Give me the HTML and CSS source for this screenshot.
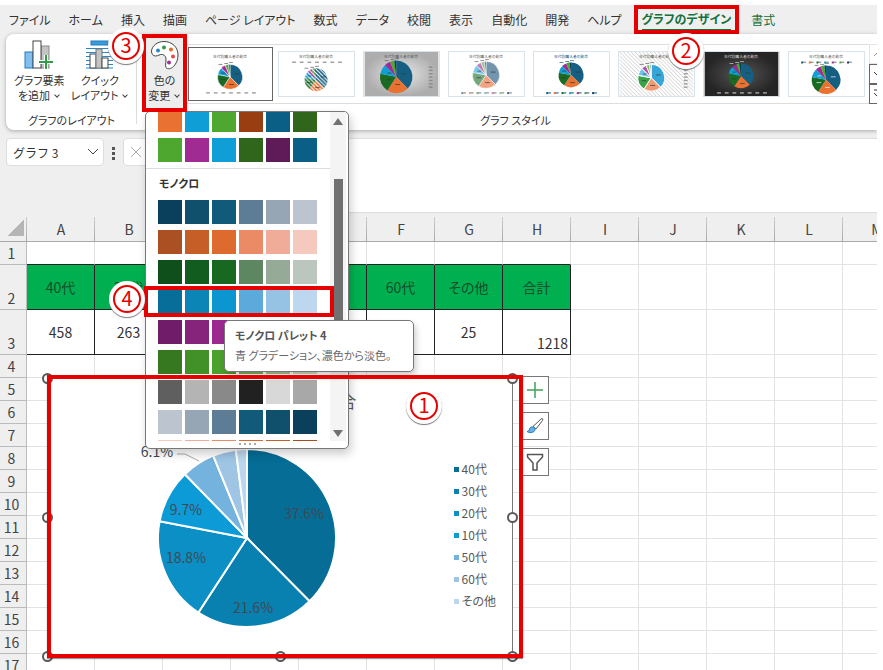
FILE: index.html
```
<!DOCTYPE html>
<html lang="ja">
<head>
  <meta charset="UTF-8">
  <meta name="viewport" content="width=device-width, initial-scale=1.0">
  <title>グラフのデザイン</title>
  <link rel="stylesheet" href="styles.css">
</head>
<body>
  <div class="window">
    <nav class="tabs">
      <button>ファイル</button>
      <button>ホーム</button>
      <button>挿入</button>
      <button>描画</button>
      <button>ページ レイアウト</button>
      <button>数式</button>
      <button>データ</button>
      <button>校閲</button>
      <button>表示</button>
      <button>自動化</button>
      <button>開発</button>
      <button>ヘルプ</button>
      <button class="active"><span>グラフのデザイン</span></button>
      <button class="context">書式</button>
    </nav>

    <div class="ribbon">
      <section class="group layout-group">
        <div class="tools">
          <button class="tool">
            <svg width="30" height="30" viewBox="0 0 30 30">
              <rect x="1" y="12" width="8" height="16" fill="#83beec" stroke="#1e7fc0"/>
              <rect x="17" y="6" width="8" height="22" fill="#c4c4c4" stroke="#8a8a8a"/>
              <rect x="9" y="1" width="8" height="27" fill="#fff" stroke="#444"/>
              <path d="M22 15v14M15 22h14" stroke="#fff" stroke-width="4"/>
              <path d="M22 15v14M15 22h14" stroke="#2f9c48" stroke-width="2"/>
            </svg>
            <span>グラフ要素<br>を追加 <i class="caret"></i></span>
          </button>
          <button class="tool">
            <svg width="30" height="30" viewBox="0 0 30 30">
              <rect x="6" y="1" width="17" height="4" fill="#3b9ad9" stroke="#1e7fc0"/>
              <path d="M1 8.500h27M1 12.500h27M1 16.500h27M1 20.500h27M1 24.500h27M1 28h27" stroke="#2589c9"/>
              <rect x="5" y="14" width="6" height="14" fill="#fff" stroke="#444"/>
              <rect x="11" y="9" width="6" height="19" fill="#c4c4c4" stroke="#777"/>
              <rect x="17" y="18" width="6" height="10" fill="#fff" stroke="#444"/>
            </svg>
            <span>クイック<br>レイアウト <i class="caret"></i></span>
          </button>
        </div>
        <h2>グラフのレイアウト</h2>
        <b class="step step-3">3</b>
      </section>

      <section class="group style-group">
        <div class="tools">
          <div class="color-menu">
            <button class="tool open">
              <svg width="30" height="30" viewBox="0 0 30 30">
                <path d="M14 1.500C7 1.500 2 6 1.500 11c0 3 1.500 5 4 5 3 0 4-2 7-1.500 3 1 3.500 3 3.500 5.500 0 3-1 5 0 7.500 1.500 2 5 1.500 7.500-1 3-3 4.500-7 4.500-11.500C28 7 22 1.500 14 1.500z" fill="#fff" stroke="#444"/>
                <circle cx="8" cy="10.500" r="2" fill="#2589c9"/>
                <circle cx="14" cy="7.500" r="2" fill="#2f9c48"/>
                <circle cx="21" cy="9.500" r="2" fill="#e46a1f"/>
                <circle cx="23" cy="16.500" r="2" fill="#ea4648"/>
                <circle cx="19" cy="22.500" r="2" fill="#a2309c"/>
              </svg>
              <span>色の<br>変更 <i class="caret"></i></span>
            </button>

            <div class="popup">
              <div class="popup-body">
                <div class="palettes">
                  <div id="colorful"></div>
                  <h3>モノクロ</h3>
                  <div id="mono"></div>
                </div>
                <div class="scrollbar">
                  <span class="up"></span>
                  <span class="thumb"></span>
                  <span class="down"></span>
                </div>
              </div>
              <div class="grip"><i></i><i></i><i></i><i></i></div>
              <div class="row-mark"></div>
              <div class="tooltip" role="tooltip">
                <strong>モノクロ パレット 4</strong>
                <span>青 グラデーション、濃色から淡色。</span>
              </div>
              <b class="step step-4">4</b>
            </div>
          </div>
          <div class="gallery" id="gallery"></div>
          <div class="gallery-scroll">
            <button aria-label="上へ" disabled><svg width="14" height="8" viewBox="0 0 14 8"><path d="M4 6l4-4 4 4"/></svg></button>
            <button aria-label="下へ"><svg width="14" height="8" viewBox="0 0 14 8"><path d="M4 2l4 4 4-4"/></svg></button>
            <button aria-label="その他"><svg width="14" height="10" viewBox="0 0 14 10"><path d="M4 1h8M4 4l4 4 4-4"/></svg></button>
          </div>
        </div>
        <h2>グラフ スタイル</h2>
        <b class="step step-2">2</b>
      </section>
    </div>

    <div class="formula-bar">
      <label class="name-box">
        <select aria-label="名前ボックス"><option>グラフ 3</option></select>
        <svg width="12" height="8" viewBox="0 0 12 8"><path d="M1 1l5 5 5-5"/></svg>
      </label>
      <div class="dots"><i></i><i></i><i></i></div>
      <button class="cancel" aria-label="キャンセル"><svg width="12" height="12" viewBox="0 0 12 12"><path d="M1 1l10 10M11 1L1 11"/></svg></button>
      <input class="formula" type="text" aria-label="数式バー">
    </div>

    <div class="sheet">
      <table id="grid"></table>

      <div class="chart">
        <h4>年代別購入者の割合</h4>
        <div class="chart-content">
          <svg id="pie" width="220" height="200" viewBox="0 0 220 200"></svg>
          <ul id="legend"></ul>
        </div>
        <i class="handle top left"></i>
        <i class="handle top right"></i>
        <i class="handle middle left"></i>
        <i class="handle middle right"></i>
        <i class="handle bottom left"></i>
        <i class="handle bottom center"></i>
        <i class="handle bottom right"></i>
        <div class="chart-buttons">
          <button aria-label="グラフ要素"><svg width="18" height="18" viewBox="0 0 18 18"><path d="M9 1v16M1 9h16" stroke="#3fa35a" stroke-width="1.500"/></svg></button>
          <button aria-label="グラフ スタイル"><svg width="18" height="18" viewBox="0 0 18 18">
            <path d="M7 9.500L15 2c1.500-1 2.500 0 1.500 1.500L10 12z" fill="#fff" stroke="#555"/>
            <path d="M1 14.500c2 0 2-1 2.500-2.500.700-2 2.500-2.500 4-2 2 1 2 3 .500 4.500-2 1.500-5 1.500-7 0z" fill="#69b1e4" stroke="#1e7fc0"/>
          </svg></button>
          <button aria-label="グラフ フィルター"><svg width="18" height="18" viewBox="0 0 18 18"><path d="M1.500 1.500h15v2.500L11 10v7H7v-7L1.500 4z" fill="#fff" stroke="#555" stroke-width="1.500"/></svg></button>
        </div>
        <div class="chart-mark"></div>
        <b class="step step-1">1</b>
      </div>
    </div>
  </div>

  <script src="script.js"></script>
</body>
</html>
```

FILE: styles.css
```
* {
  box-sizing: border-box;
}
body {
  margin: 0;
  height: 100vh;
  overflow: hidden;
  background: #fff;
  color: #333;
  font-family: "Noto Sans CJK JP", sans-serif;
  font-size: 12px;
  font-feature-settings: "palt";
}
button, select, input {
  font: inherit;
  font-feature-settings: inherit;
  color: inherit;
  border: none;
  background: none;
  padding: 0;
  margin: 0;
}
svg {
  display: block;
  fill: none;
}
.window {
  margin: 5px 6px 0 0;
  height: calc(100vh - 5px);
  overflow: hidden;
  background: #efefef;
  display: flex;
  flex-direction: column;
}

/* tabs */
.tabs {
  display: flex;
  flex: none;
  height: 29px;
  padding-left: 9px;
  gap: 18px;
  font-size: 12px;
  white-space: nowrap;
}
.tabs button {
  flex: none;
}
.tabs .active {
  border: 4px solid #e60000;
  padding: 0 4px;
  margin: 0 -6px;
  font-weight: bold;
  color: #14713c;
}
.tabs .active span {
  display: block;
  line-height: 20px;
  border-bottom: 1px solid #14713c;
}
.tabs .context {
  color: #14713c;
}

/* ribbon */
.ribbon {
  position: relative;
  display: flex;
  flex: none;
  height: 96px;
  margin-left: 6px;
  background: #fff;
  border-radius: 8px 0 0 8px;
  box-shadow: 0 1px 4px rgba(0, 0, 0, 0.3);
}
.group {
  position: relative;
  display: flex;
  flex-direction: column;
}
.group h2 {
  margin: 0;
  font-size: 11px;
  font-weight: normal;
  line-height: 16px;
  text-align: center;
}
.tools {
  display: flex;
  height: 78px;
}
.layout-group {
  width: 131px;
}
.layout-group::after {
  content: "";
  position: absolute;
  right: 0;
  top: 8px;
  bottom: 6px;
  border-right: 1px solid #ddd;
}
.tool {
  flex: 1;
  display: flex;
  flex-direction: column;
  align-items: center;
  padding-top: 6px;
  font-size: 11px;
  line-height: 15px;
  white-space: nowrap;
}
.tool span {
  margin-top: 3px;
}
.layout-group .tool {
  flex: none;
}
.layout-group .tools {
  justify-content: center;
  gap: 6px;
}
.caret {
  display: inline-block;
  width: 4px;
  height: 4px;
  margin: 0 2px 3px 2px;
  border: solid #444;
  border-width: 0 1px 1px 0;
  transform: rotate(45deg);
}
.style-group {
  flex: 1;
  min-width: 0;
  padding-left: 5px;
}
.style-group h2 {
  padding-left: 12px;
}
.color-menu {
  position: relative;
  flex: none;
}
.tool.open {
  width: 45px;
  height: 78px;
  border: 4px solid #e60000;
  padding-top: 2px;
  background: #ededed;
  position: relative;
  z-index: 12;
}
.gallery {
  display: flex;
  flex: none;
  gap: 8px;
  align-items: center;
  height: 60px;
  margin-top: 10px;
  padding: 0 4px;
  border: solid #ddd;
  border-width: 1px 0;
}
.gallery button {
  flex: none;
  border: 1px solid #dbe3ea;
}
.gallery button.selected {
  padding: 4px;
  border: 1px solid #666;
  margin: 0 -3px;
}
.gallery-scroll {
  display: flex;
  flex-direction: column;
  flex: 1;
  margin-top: 10px;
  height: 60px;
}
.gallery-scroll button {
  flex: 1;
  border: 1px solid #666;
  overflow: hidden;
}
.gallery-scroll button:disabled {
  border-color: #ccc;
  opacity: 0.5;
}
.gallery-scroll svg {
  stroke: #333;
}

/* color palette drop-down */
.popup {
  position: absolute;
  z-index: 10;
  left: 3px;
  top: 77px;
  width: 204px;
  height: 338px;
  background: #fff;
  border: 1px solid #777;
  border-radius: 5px;
  box-shadow: 2px 5px 10px rgba(0, 0, 0, 0.2);
}
.popup-body {
  display: flex;
  height: 329px;
  padding-right: 2px;
  overflow: hidden;
}
.palettes {
  flex: 1;
  margin-top: -7px;
}
.palette {
  display: flex;
  gap: 3px;
  height: 24px;
  margin: 3px 0 6px 12px;
}
.palette i {
  width: 24px;
  height: 24px;
}
.palettes h3 {
  margin: 0;
  padding: 0 13px;
  border-top: 1px solid #ddd;
  font-size: 11px;
  line-height: 28px;
}
.scrollbar {
  display: flex;
  flex-direction: column;
  align-items: center;
  justify-content: space-between;
  width: 16px;
  padding: 6px 0 4px;
  background: #f4f4f4;
}
.scrollbar .thumb {
  width: 9px;
  height: 168px;
  margin-bottom: 30px;
  background: #707070;
}
.scrollbar .up,
.scrollbar .down {
  border: 5px solid transparent;
}
.scrollbar .up {
  border-top: none;
  border-bottom: 7px solid #707070;
}
.scrollbar .down {
  border-bottom: none;
  border-top: 7px solid #707070;
}
.grip {
  display: flex;
  justify-content: center;
  gap: 3px;
  padding-top: 2px;
}
.grip i {
  width: 2px;
  height: 2px;
  background: #aaa;
}
.row-mark {
  position: absolute;
  left: -2px;
  top: 174px;
  width: 190px;
  height: 31px;
  border: 4px solid #e60000;
}
.tooltip {
  position: absolute;
  left: 78px;
  top: 208px;
  width: 190px;
  height: 52px;
  display: flex;
  flex-direction: column;
  padding: 4px 10px;
  font-size: 11px;
  line-height: 20px;
  white-space: nowrap;
  color: #666;
  background: #fff;
  border: 1px solid #777;
  border-radius: 5px;
  box-shadow: 2px 4px 6px rgba(0, 0, 0, 0.2);
}
.tooltip strong {
  color: #555;
}

/* numbered steps */
.step {
  position: absolute;
  z-index: 30;
  width: 28px;
  height: 28px;
  border: 2px solid #e60000;
  border-radius: 50%;
  background: #fff;
  box-shadow: 0 0 0 4px #fff, 0 1px 1px 4px #777;
  color: #e60000;
  font-size: 20px;
  font-weight: normal;
  line-height: 22px;
  text-align: center;
}
.step-1 {
  left: 362px;
  top: 13px;
}
.step-2 {
  left: 535px;
  top: 3px;
}
.step-3 {
  left: 106px;
  top: -2px;
}
.step-4 {
  left: -33px;
  top: 173px;
}

/* formula bar */
.formula-bar {
  display: flex;
  flex: none;
  align-items: flex-start;
  height: 75px;
  margin: 8px 0 0 6px;
}
.name-box {
  display: flex;
  align-items: center;
  width: 98px;
  height: 28px;
  padding: 0 4px 0 6px;
  background: #fff;
  border: 1px solid #ddd;
  border-radius: 4px;
  font-size: 12px;
}
.name-box select {
  flex: 1;
  min-width: 0;
  appearance: none;
  outline: none;
  font-feature-settings: normal;
}
.name-box svg {
  stroke: #444;
}
.dots {
  display: flex;
  flex-direction: column;
  gap: 2px;
  padding: 9px 8px;
}
.dots i {
  width: 3px;
  height: 3px;
  background: #555;
}
.cancel {
  display: flex;
  align-items: center;
  width: 80px;
  height: 28px;
  padding-left: 6px;
  background: #fff;
  border: 1px solid #ddd;
  border-radius: 4px;
}
.cancel svg {
  stroke: #aaa;
}
.formula {
  flex: 1;
  height: 75px;
  background: #fff;
  border: solid #ddd;
  border-width: 1px 0;
}

/* worksheet */
.sheet {
  position: relative;
  flex: 1;
  background: #fff;
}
#grid {
  border-collapse: separate;
  border-spacing: 0;
  font-size: 14px;
  line-height: 18px;
}
#grid th {
  padding: 0;
  font-weight: normal;
  color: #444;
  background: #efefef;
}
#grid thead th {
  min-width: 68px;
  height: 29px;
  padding-top: 4px;
  border-bottom: 1px solid #aaa;
  background: linear-gradient(#ccc, #aaa) right bottom / 1px 24px no-repeat #efefef;
}
#grid thead th:first-child {
  min-width: 27px;
  padding: 0 2px 0 7px;
}
#grid tbody th {
  border: solid #bbb;
  border-width: 0 1px 1px 0;
  vertical-align: bottom;
  padding: 0 3px 2px 0;
}
#grid td {
  height: 23px;
  padding: 0;
  border: solid #e3e3e3;
  border-width: 0 1px 1px 0;
  text-align: center;
}
#grid .tall td {
  height: 45px;
}
#grid .head {
  background: #00b050;
  color: #124d2b;
}
#grid .box {
  border-color: #222;
}
#grid .over {
  border-bottom-color: #222;
}
#grid .total {
  text-align: right;
  vertical-align: bottom;
  padding: 0 2px 2px 0;
}
.corner {
  width: 17px;
  height: 17px;
  background: linear-gradient(135deg, transparent 50%, #b5b5b5 50%);
}

/* chart */
.chart {
  position: absolute;
  left: 47px;
  top: 165px;
  width: 466px;
  height: 279px;
  background: #fff;
  border: 1px solid #777;
}
.chart h4 {
  margin: 8px 0 0;
  font-size: 17px;
  font-weight: normal;
  line-height: 28px;
  text-align: center;
  color: #595959;
}
.chart-content {
  display: flex;
  justify-content: space-between;
  align-items: center;
  padding: 20px 16px 0 89px;
}
#pie text {
  font-size: 14px;
  fill: #404a52;
  text-anchor: middle;
}
#legend {
  margin: 0;
  padding: 0;
  list-style: none;
  color: #595959;
  line-height: 22px;
}
#legend li {
  display: flex;
  align-items: center;
  gap: 3px;
}
#legend i {
  width: 5px;
  height: 5px;
}
.handle {
  position: absolute;
  width: 11px;
  height: 11px;
  border: 2px solid #595959;
  border-radius: 50%;
  background: #fff;
}
.handle.top { top: -6px; }
.handle.middle { top: 133px; }
.handle.bottom { bottom: -6px; }
.handle.left { left: -6px; }
.handle.center { left: 227px; }
.handle.right { right: -6px; }
.chart-buttons {
  position: absolute;
  left: 473px;
  top: -3px;
  display: flex;
  flex-direction: column;
  gap: 8px;
}
.chart-buttons button {
  display: flex;
  align-items: center;
  justify-content: center;
  width: 28px;
  height: 28px;
  background: #fff;
  border: 1px solid #777;
}
.chart-mark {
  position: absolute;
  z-index: 20;
  left: -1px;
  top: -4px;
  width: 476px;
  height: 283px;
  border: 4px solid #e60000;
  box-shadow: 0 1px 1px rgba(0, 0, 0, 0.4);
}
```

FILE: script.js
```
const values = [37.6, 21.6, 18.8, 9.7, 6.1, 4.2, 2.0];
const names = ['40代', '30代', '20代', '10代', '50代', '60代', 'その他'];
const blues = ['#056d96', '#0880b0', '#0b8fc4', '#0c9bd7', '#74b3de', '#9fc5e5', '#bcd7ed'];
const colorful = ['#156082', '#e97132', '#196b24', '#0f9ed5', '#a02b93', '#4ea72e', '#0c3f5a'];

function pieSlices(cx, cy, r, colors, extra) {
  const total = values.reduce((a, b) => a + b, 0);
  let angle = -Math.PI / 2;
  return values.map((v, i) => {
    const end = angle + v / total * Math.PI * 2;
    const x1 = cx + r * Math.cos(angle), y1 = cy + r * Math.sin(angle);
    const x2 = cx + r * Math.cos(end), y2 = cy + r * Math.sin(end);
    angle = end;
    return `<path d="M${cx} ${cy}L${x1} ${y1}A${r} ${r} 0 0 1 ${x2} ${y2}Z" fill="${colors[i]}" ${extra}/>`;
  }).join('');
}

// main chart
document.getElementById('pie').innerHTML =
  pieSlices(110, 103, 89, blues, 'stroke="#fff" stroke-width="2"') +
  '<path d="M40 19h8l14 7" stroke="#aaa"/>' +
  '<text x="167" y="84">37.6%</text>' +
  '<text x="116" y="178">21.6%</text>' +
  '<text x="49" y="128">18.8%</text>' +
  '<text x="49" y="80">9.7%</text>' +
  '<text x="20" y="22">6.1%</text>';

document.getElementById('legend').innerHTML = names
  .map((n, i) => `<li><i style="background:${blues[i]}"></i>${n}</li>`).join('');

// palettes
function palette(colors) {
  return `<button class="palette">${colors.split(' ')
    .map(c => `<i style="background:#${c}"></i>`).join('')}</button>`;
}
document.getElementById('colorful').innerHTML = [
  'e97132 0f9ed5 4ea72e 993e10 095f85 2f661b',
  '4ea72e a02b93 0f9ed5 2f661b 5f1a58 095f85'
].map(palette).join('');
document.getElementById('mono').innerHTML = [
  '0b405c 11506c 125a7a 5d7c96 97a6b5 bbc4cf',
  'aa5023 c65e27 dd6b2e eb8b65 f0ac98 f5c9be',
  '0f4f1b 135c1f 196822 5c8760 95aa97 bbc7be',
  '066e98 0b84b6 0c96d0 5caadb 96c2e3 bcd7ee',
  '701c68 86247c 9b2990 b35fa9 c993c2 dcbbd8',
  '35781f 419028 4aa12c 74b65c 9fca90 c3deba',
  '5f5f5f b4b4b4 898989 212121 d8d8d8 a8a8a8',
  'bbc4cf 97a6b5 5d7c96 125a7a 11506c 0b405c',
  'f5c9be f0ac98 eb8b65 dd6b2e c65e27 aa4a18'
].map(palette).join('');

// style gallery
const pale = ['#7395ad', '#f2a482', '#77a77d', '#7cc8ea', '#c57cbb', '#96ca83', '#456f86'];
const light = ['#36a5d8', '#ee9a72', '#38a344', '#70c6ea', '#b44ca9', '#72c153', '#6688a0'];
const styles = [
  { x: 38, y: 26, r: 13, bg: '#fff', legend: 'bottom', selected: true, colors: colorful, gap: 0.5 },
  { x: 38, y: 29, r: 12, bg: '#fff', legend: 'top', colors: colorful, hatch: true },
  { x: 33, y: 26, r: 17, bg: 'url(#gray)', legend: 'right', colors: colorful },
  { x: 38, y: 24, r: 14, bg: '#fff', legend: 'bottom', colors: pale, gap: 0.5, colored: true },
  { x: 38, y: 24, r: 13, bg: '#fff', legend: 'bottom', colors: colorful, ink: '#12507a', colored: true },
  { x: 33, y: 27, r: 14, bg: 'url(#stripes)', legend: 'right', colors: light, gap: 1 },
  { x: 38, y: 25, r: 13, bg: 'url(#dark)', legend: 'bottom', colors: colorful, ink: '#ddd' },
  { x: 38, y: 29, r: 15, bg: '#fff', legend: 'top', colors: colorful, colored: true }
];

function miniLegend(s) {
  const ink = s.ink || '#777';
  return values.map((v, i) => {
    const x = s.legend === 'right' ? 67 : 13 + i * 8;
    const y = s.legend === 'right' ? 15 + i * 3.5 : s.legend === 'top' ? 10 : 42;
    return `<rect x="${x}" y="${y}" width="4" height="1.500" fill="${ink}" opacity="0.7"/>` +
      (s.colored ? `<rect x="${x - 1}" y="${y}" width="2" height="2" fill="${s.colors[i]}"/>` : '');
  }).join('');
}

function thumb(s) {
  const stroke = s.gap ? `stroke="#fff" stroke-width="${s.gap}"` : '';
  const ink = s.ink || '#555';
  return `<button aria-label="スタイル" class="${s.selected ? 'selected' : ''}">
    <svg width="75" height="44" viewBox="0 0 77 46">
      <rect width="77" height="46" fill="${s.bg}"/>
      <text x="38" y="6" font-size="4" text-anchor="middle" fill="${ink}">年代別購入者の割合</text>
      ${pieSlices(s.x, s.y, s.r, s.colors, stroke)}
      ${s.hatch ? `<circle cx="${s.x}" cy="${s.y}" r="${s.r + 1}" fill="url(#hatch)"/>` : ''}
      <path d="M${s.x - 12} ${s.y - s.r}h4M${s.x - 6} ${s.y - s.r - 1}h4M${s.x - 1} ${s.y - s.r - 2}h4" stroke="${ink}" opacity="0.7"/>
      <path d="M${s.x + 5} ${s.y - 3}h5M${s.x - 1} ${s.y + 8}h5M${s.x - 10} ${s.y + 3}h5M${s.x - 9} ${s.y - 4}h4" stroke="${s.r === 15 ? '#fff' : '#333'}" opacity="0.7"/>
      ${miniLegend(s)}
    </svg></button>`;
}

const defs = `<svg width="0" height="0" style="position:absolute"><defs>
  <radialGradient id="gray"><stop offset="0" stop-color="#e8e8e8"/><stop offset="1" stop-color="#adadad"/></radialGradient>
  <radialGradient id="dark"><stop offset="0" stop-color="#555"/><stop offset="1" stop-color="#252525"/></radialGradient>
  <pattern id="stripes" width="4" height="4" patternUnits="userSpaceOnUse"><rect width="4" height="4" fill="#fff"/><path d="M-1 -1L5 5M-1 3L1 5M3 -1L5 1" stroke="#ccc"/></pattern>
  <pattern id="hatch" width="4" height="4" patternUnits="userSpaceOnUse"><path d="M-1 -1L5 5M-1 3L1 5M3 -1L5 1" stroke="#fff" stroke-width="1.200"/></pattern>
</defs></svg>`;
document.body.insertAdjacentHTML('beforeend', defs);
document.getElementById('gallery').innerHTML = styles.map(thumb).join('');

// worksheet
const columns = 'ABCDEFGHIJKLM'.split('');
const heads = ['40代', '30代', '', '', '', '60代', 'その他', '合計'];
const counts = ['458', '263', '', '', '', '', '25', '1218'];

let html = '<thead><tr><th><div class="corner"></div></th>' +
  columns.map(c => `<th>${c}</th>`).join('') + '</tr></thead><tbody>';
for (let row = 1; row <= 17; row++) {
  html += `<tr class="${row === 2 || row === 3 ? 'tall' : ''}"><th>${row}</th>`;
  columns.forEach((c, i) => {
    let cls = '', text = '';
    if (i < 8) {
      if (row === 1) cls = 'over';
      if (row === 2) { cls = 'box head'; text = heads[i]; }
      if (row === 3) { cls = i === 7 ? 'box total' : 'box'; text = counts[i]; }
    }
    html += `<td class="${cls}">${text}</td>`;
  });
  html += '</tr>';
}
document.getElementById('grid').innerHTML = html + '</tbody>';
```
